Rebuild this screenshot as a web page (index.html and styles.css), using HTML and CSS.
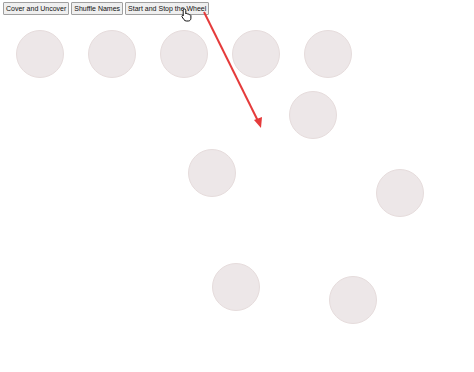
FILE: index.html
```html
<!DOCTYPE html>
<html lang="en">
<head>
    <meta charset="UTF-8">
    <meta name="viewport" content="width=device-width, initial-scale=1.0">
    <title>Name Wheel</title>
    <link rel="stylesheet" href="styles.css">
</head>
<body>

    <div class="toolbar">
        <button type="button">Cover and Uncover</button>
        <button type="button">Shuffle Names</button>
        <button type="button">Start and Stop the Wheel</button>
    </div>

    <div class="stage">
        <div class="row">
            <div class="dot"></div>
            <div class="dot"></div>
            <div class="dot"></div>
            <div class="dot"></div>
            <div class="dot"></div>
        </div>

        <div class="dot loose" style="left: 289px; top: 61px;"></div>
        <div class="dot loose" style="left: 188px; top: 119px;"></div>
        <div class="dot loose" style="left: 376px; top: 139px;"></div>
        <div class="dot loose" style="left: 212px; top: 233px;"></div>
        <div class="dot loose" style="left: 329px; top: 246px;"></div>
    </div>

    <!-- annotation arrow and cursor drawn over the page -->
    <svg class="arrow" width="474" height="372" viewBox="0 0 474 372">
        <line x1="204" y1="12" x2="258" y2="121" stroke="#e53b3b" stroke-width="2"/>
        <polygon points="261,128 254,120 262,117" fill="#e53b3b"/>
    </svg>
    <svg class="cursor" width="12" height="14" viewBox="0 0 12 14">
        <path d="M3.5 1 C4.3 1 4.8 1.5 4.8 2.3 V6 L5.2 5.6 C6 5.3 6.6 5.6 6.8 6.2 C7.5 5.9 8.2 6.2 8.4 6.8 C9.1 6.6 9.9 7 9.9 7.8 V10.3 C9.9 11.8 8.8 13 7.3 13 H5.3 C4.3 13 3.6 12.5 3 11.7 L1.1 8.9 C0.7 8.3 0.9 7.6 1.5 7.4 C2 7.2 2.4 7.4 2.2 7.8 V2.3 C2.2 1.5 2.7 1 3.5 1 Z" fill="#fff" stroke="#111" stroke-width="1"/>
    </svg>

</body>
</html>
```

FILE: styles.css
```css
body {
    margin: 0;
    font-family: "Liberation Sans", Arial, sans-serif;
    background: #fff;
}
.toolbar {
    display: flex;
    gap: 2px;
    padding: 2px 3px 0;
    height: 13px;
}
button {
    font-family: "Liberation Sans", Arial, sans-serif;
    font-size: 7px;
    line-height: 9px;
    padding: 1px 2px;
    color: #111;
    background-color: #efefef;
    border: 1px solid #a0a0a0;
    border-radius: 1px;
    white-space: nowrap;
}
.stage {
    position: relative;
    margin-top: 15px;
    height: 327px;
}
.row {
    display: flex;
    gap: 24px;
    padding-left: 16px;
}
.dot {
    width: 48px;
    height: 48px;
    box-sizing: border-box;
    border-radius: 50%;
    background-color: #ede7e8;
    border: 1px solid #e6dcdc;
    flex-shrink: 0;
}
.dot.loose {
    position: absolute;
}
.arrow {
    position: absolute;
    left: 0;
    top: 0;
    pointer-events: none;
}
.cursor {
    position: absolute;
    left: 181px;
    top: 8px;
}
```
